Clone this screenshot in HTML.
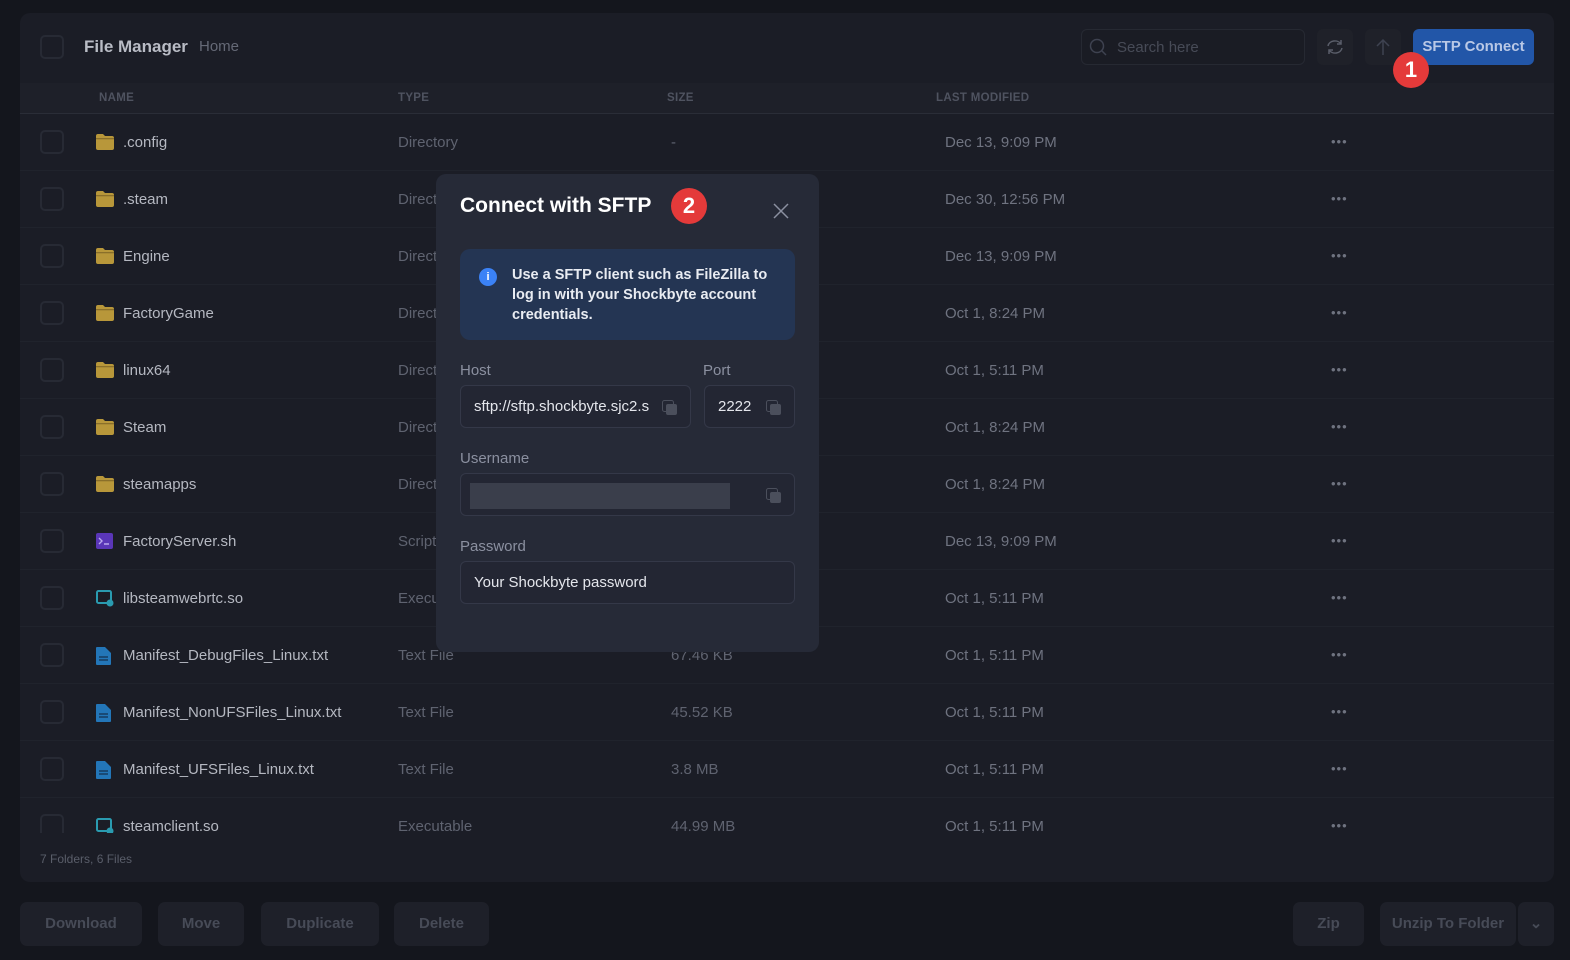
<!DOCTYPE html>
<html><head><meta charset="utf-8"><style>
*{box-sizing:border-box;margin:0;padding:0}
body{width:1570px;height:960px;background:#14161d;font-family:"Liberation Sans",sans-serif;position:relative;overflow:hidden;color:#9ea2ad}
.panel{position:absolute;left:20px;top:13px;width:1534px;height:869px;background:#1b1d26;border-radius:10px;overflow:hidden}
.cb{position:absolute;width:24px;height:24px;border:2px solid #272a34;border-radius:5px}
.hdr{position:absolute;left:0;top:70px;width:100%;height:31px;background:#1e2029;border-bottom:1px solid #2a2d37}
.th{position:absolute;top:79px;font-size:11.5px;font-weight:bold;color:#4f5360;letter-spacing:.3px}
.rows{position:absolute;left:0;top:101px;width:100%;height:719px;overflow:hidden}
.row{position:absolute;left:0;width:100%;height:57px;border-bottom:1px solid #20232c}
.row span{position:absolute;top:20px;font-size:15px}
.nm{left:103px;color:#b5b8c1}
.ty{left:378px;color:#5f6370}
.sz{left:651px;color:#5f6370}
.dt{left:925px;color:#6f7380}
.dots{left:1311px;color:#6f7380;letter-spacing:1px;font-size:13px!important}
.ic{position:absolute;left:76px;top:20px}
.btn{position:absolute;top:902px;height:44px;background:#1e2029;border-radius:7px;color:#474b57;font-size:15px;font-weight:bold;text-align:center;line-height:44px}
.modal{position:absolute;left:436px;top:174px;width:383px;height:478px;background:#262a37;border-radius:10px}
.lbl{position:absolute;left:24px;font-size:15px;color:#8b90a0}
.inp{position:absolute;height:43px;border:1.5px solid #343848;border-radius:6px;background:#232633;font-size:15px;color:#e4e6ec;padding-left:13px;line-height:41px;overflow:hidden;white-space:nowrap}
</style></head><body>
<div class="panel">
  <div class="cb" style="left:20px;top:22px"></div>
  <div style="position:absolute;left:64px;top:24px;font-size:17px;font-weight:bold;color:#b9bcc5">File Manager</div>
  <div style="position:absolute;left:179px;top:25px;font-size:15px;color:#656976">Home</div>
  <div style="position:absolute;left:1061px;top:16px;width:224px;height:36px;border:1.5px solid #262932;border-radius:6px;background:#1a1c24"></div>
  <svg style="position:absolute;left:1068px;top:24px" width="20" height="20" viewBox="0 0 20 20"><circle cx="9" cy="9" r="6.5" fill="none" stroke="#3e4250" stroke-width="1.5"/><path d="M14 14l4 4" stroke="#3e4250" stroke-width="1.5"/></svg>
  <div style="position:absolute;left:1097px;top:26px;font-size:15px;color:#474b57">Search here</div>
  <div style="position:absolute;left:1297px;top:16px;width:36px;height:36px;background:#1f2129;border-radius:6px"></div>
  <svg style="position:absolute;left:1305px;top:24px" width="20" height="20" viewBox="0 0 20 20" fill="none" stroke="#5a5e6a" stroke-width="1.5"><path d="M3 9a7 6 0 0 1 13-2M17 11a7 6 0 0 1-13 2"/><path d="M16 3v4h-4M4 17v-4h4"/></svg>
  <div style="position:absolute;left:1345px;top:16px;width:36px;height:36px;background:#1f2129;border-radius:6px"></div>
  <svg style="position:absolute;left:1353px;top:24px" width="20" height="20" viewBox="0 0 20 20" fill="none" stroke="#3e4250" stroke-width="1.5"><path d="M10 18V3M4 9l6-6 6 6"/></svg>
  <div style="position:absolute;left:1393px;top:16px;width:121px;height:36px;background:#2256a8;border-radius:6px;color:#b9c8e6;font-size:15px;font-weight:bold;text-align:center;line-height:36px">SFTP Connect</div>
  <div class="hdr"></div>
  <div style="position:absolute;left:1373px;top:39px;width:36px;height:36px;background:#e43a3a;border-radius:50%;color:#fff;font-size:22px;font-weight:bold;text-align:center;line-height:36px;z-index:5">1</div>
  <div class="th" style="left:79px">NAME</div>
  <div class="th" style="left:378px">TYPE</div>
  <div class="th" style="left:647px">SIZE</div>
  <div class="th" style="left:916px">LAST MODIFIED</div>
  <div class="rows">
    <div class="row" style="top:0"><div class="cb" style="left:20px;top:16px"></div><svg class="ic" width="18" height="16"><path d="M0 2a2 2 0 0 1 2-2h5l2 2h7a2 2 0 0 1 2 2v10a2 2 0 0 1-2 2H2a2 2 0 0 1-2-2z" fill="#b8973a"/><rect x="0" y="4" width="18" height="1.3" fill="#8a6f2a"/></svg><span class="nm">.config</span><span class="ty">Directory</span><span class="sz">-</span><span class="dt">Dec 13, 9:09 PM</span><span class="dots">•••</span></div>
    <div class="row" style="top:57px"><div class="cb" style="left:20px;top:16px"></div><svg class="ic" width="18" height="16"><path d="M0 2a2 2 0 0 1 2-2h5l2 2h7a2 2 0 0 1 2 2v10a2 2 0 0 1-2 2H2a2 2 0 0 1-2-2z" fill="#b8973a"/><rect x="0" y="4" width="18" height="1.3" fill="#8a6f2a"/></svg><span class="nm">.steam</span><span class="ty">Directory</span><span class="dt">Dec 30, 12:56 PM</span><span class="dots">•••</span></div>
    <div class="row" style="top:114px"><div class="cb" style="left:20px;top:16px"></div><svg class="ic" width="18" height="16"><path d="M0 2a2 2 0 0 1 2-2h5l2 2h7a2 2 0 0 1 2 2v10a2 2 0 0 1-2 2H2a2 2 0 0 1-2-2z" fill="#b8973a"/><rect x="0" y="4" width="18" height="1.3" fill="#8a6f2a"/></svg><span class="nm">Engine</span><span class="ty">Directory</span><span class="dt">Dec 13, 9:09 PM</span><span class="dots">•••</span></div>
    <div class="row" style="top:171px"><div class="cb" style="left:20px;top:16px"></div><svg class="ic" width="18" height="16"><path d="M0 2a2 2 0 0 1 2-2h5l2 2h7a2 2 0 0 1 2 2v10a2 2 0 0 1-2 2H2a2 2 0 0 1-2-2z" fill="#b8973a"/><rect x="0" y="4" width="18" height="1.3" fill="#8a6f2a"/></svg><span class="nm">FactoryGame</span><span class="ty">Directory</span><span class="dt">Oct 1, 8:24 PM</span><span class="dots">•••</span></div>
    <div class="row" style="top:228px"><div class="cb" style="left:20px;top:16px"></div><svg class="ic" width="18" height="16"><path d="M0 2a2 2 0 0 1 2-2h5l2 2h7a2 2 0 0 1 2 2v10a2 2 0 0 1-2 2H2a2 2 0 0 1-2-2z" fill="#b8973a"/><rect x="0" y="4" width="18" height="1.3" fill="#8a6f2a"/></svg><span class="nm">linux64</span><span class="ty">Directory</span><span class="dt">Oct 1, 5:11 PM</span><span class="dots">•••</span></div>
    <div class="row" style="top:285px"><div class="cb" style="left:20px;top:16px"></div><svg class="ic" width="18" height="16"><path d="M0 2a2 2 0 0 1 2-2h5l2 2h7a2 2 0 0 1 2 2v10a2 2 0 0 1-2 2H2a2 2 0 0 1-2-2z" fill="#b8973a"/><rect x="0" y="4" width="18" height="1.3" fill="#8a6f2a"/></svg><span class="nm">Steam</span><span class="ty">Directory</span><span class="dt">Oct 1, 8:24 PM</span><span class="dots">•••</span></div>
    <div class="row" style="top:342px"><div class="cb" style="left:20px;top:16px"></div><svg class="ic" width="18" height="16"><path d="M0 2a2 2 0 0 1 2-2h5l2 2h7a2 2 0 0 1 2 2v10a2 2 0 0 1-2 2H2a2 2 0 0 1-2-2z" fill="#b8973a"/><rect x="0" y="4" width="18" height="1.3" fill="#8a6f2a"/></svg><span class="nm">steamapps</span><span class="ty">Directory</span><span class="dt">Oct 1, 8:24 PM</span><span class="dots">•••</span></div>
    <div class="row" style="top:399px"><div class="cb" style="left:20px;top:16px"></div><svg class="ic" width="17" height="16"><rect width="17" height="16" rx="2" fill="#5a36b8"/><path d="M3 5l3 3-3 3M8 11h5" stroke="#b9a8ee" stroke-width="1.4" fill="none"/></svg><span class="nm">FactoryServer.sh</span><span class="ty">Script</span><span class="dt">Dec 13, 9:09 PM</span><span class="dots">•••</span></div>
    <div class="row" style="top:456px"><div class="cb" style="left:20px;top:16px"></div><svg class="ic" width="18" height="17"><rect x="1" y="1" width="14" height="12" rx="1.5" fill="none" stroke="#2a9bb0" stroke-width="2"/><circle cx="14" cy="13" r="3.5" fill="#2a9bb0"/></svg><span class="nm">libsteamwebrtc.so</span><span class="ty">Executable</span><span class="dt">Oct 1, 5:11 PM</span><span class="dots">•••</span></div>
    <div class="row" style="top:513px"><div class="cb" style="left:20px;top:16px"></div><svg class="ic" width="15" height="18"><path d="M0 1a1 1 0 0 1 1-1h8l6 6v11a1 1 0 0 1-1 1H1a1 1 0 0 1-1-1z" fill="#2376b8"/><path d="M3 10h9M3 13h9" stroke="#163c60" stroke-width="1.4"/></svg><span class="nm">Manifest_DebugFiles_Linux.txt</span><span class="ty">Text File</span><span class="sz">67.46 KB</span><span class="dt">Oct 1, 5:11 PM</span><span class="dots">•••</span></div>
    <div class="row" style="top:570px"><div class="cb" style="left:20px;top:16px"></div><svg class="ic" width="15" height="18"><path d="M0 1a1 1 0 0 1 1-1h8l6 6v11a1 1 0 0 1-1 1H1a1 1 0 0 1-1-1z" fill="#2376b8"/><path d="M3 10h9M3 13h9" stroke="#163c60" stroke-width="1.4"/></svg><span class="nm">Manifest_NonUFSFiles_Linux.txt</span><span class="ty">Text File</span><span class="sz">45.52 KB</span><span class="dt">Oct 1, 5:11 PM</span><span class="dots">•••</span></div>
    <div class="row" style="top:627px"><div class="cb" style="left:20px;top:16px"></div><svg class="ic" width="15" height="18"><path d="M0 1a1 1 0 0 1 1-1h8l6 6v11a1 1 0 0 1-1 1H1a1 1 0 0 1-1-1z" fill="#2376b8"/><path d="M3 10h9M3 13h9" stroke="#163c60" stroke-width="1.4"/></svg><span class="nm">Manifest_UFSFiles_Linux.txt</span><span class="ty">Text File</span><span class="sz">3.8 MB</span><span class="dt">Oct 1, 5:11 PM</span><span class="dots">•••</span></div>
    <div class="row" style="top:684px"><div class="cb" style="left:20px;top:16px"></div><svg class="ic" width="18" height="17"><rect x="1" y="1" width="14" height="12" rx="1.5" fill="none" stroke="#2a9bb0" stroke-width="2"/><circle cx="14" cy="13" r="3.5" fill="#2a9bb0"/></svg><span class="nm">steamclient.so</span><span class="ty">Executable</span><span class="sz">44.99 MB</span><span class="dt">Oct 1, 5:11 PM</span><span class="dots">•••</span></div>
  </div>
  <div style="position:absolute;left:20px;top:839px;font-size:12px;color:#5a5e6a">7 Folders, 6 Files</div>
</div>
<div class="btn" style="left:20px;width:122px">Download</div>
<div class="btn" style="left:158px;width:86px">Move</div>
<div class="btn" style="left:261px;width:118px">Duplicate</div>
<div class="btn" style="left:394px;width:95px">Delete</div>
<div class="btn" style="left:1293px;width:71px">Zip</div>
<div class="btn" style="left:1380px;width:136px">Unzip To Folder</div>
<div class="btn" style="left:1518px;width:36px">⌄</div>
<div class="modal">
  <div style="position:absolute;left:24px;top:20px;font-size:21px;font-weight:bold;color:#fff">Connect with SFTP</div>
  <div style="position:absolute;left:235px;top:14px;width:36px;height:36px;background:#e43a3a;border-radius:50%;color:#fff;font-size:22px;font-weight:bold;text-align:center;line-height:36px">2</div>
  <svg style="position:absolute;left:337px;top:29px" width="16" height="16"><path d="M1 1l14 14M15 1L1 15" stroke="#8b90a0" stroke-width="1.5"/></svg>
  <div style="position:absolute;left:24px;top:75px;width:335px;height:91px;background:#243553;border-radius:10px"></div>
  <div style="position:absolute;left:43px;top:94px;width:18px;height:18px;border-radius:50%;background:#3b82f6;color:#fff;font-size:11px;font-weight:bold;text-align:center;line-height:18px">i</div>
  <div style="position:absolute;left:76px;top:91px;width:275px;font-size:14.5px;font-weight:bold;color:#e9ecf2;line-height:20px">Use a SFTP client such as FileZilla to log in with your Shockbyte account credentials.</div>
  <div class="lbl" style="top:188px">Host</div>
  <div class="lbl" style="left:267px;top:188px">Port</div>
  <div class="inp" style="left:24px;top:211px;width:231px">sftp://sftp.shockbyte.sjc2.s</div>
  <div class="inp" style="left:268px;top:211px;width:91px">2222</div>
  <div class="lbl" style="top:276px">Username</div>
  <div class="inp" style="left:24px;top:299px;width:335px"><div style="position:absolute;left:9px;top:9px;width:260px;height:26px;background:#3a3e4b"></div></div>
  <div class="lbl" style="top:364px">Password</div>
  <div class="inp" style="left:24px;top:387px;width:335px">Your Shockbyte password</div>
  <svg style="position:absolute;left:226px;top:226px" width="16" height="16"><rect x="0.5" y="0.5" width="11" height="11" rx="2" fill="none" stroke="#4b4f5c"/><rect x="4" y="4" width="11" height="11" rx="2" fill="#4b4f5c"/></svg>
  <svg style="position:absolute;left:330px;top:226px" width="16" height="16"><rect x="0.5" y="0.5" width="11" height="11" rx="2" fill="none" stroke="#4b4f5c"/><rect x="4" y="4" width="11" height="11" rx="2" fill="#4b4f5c"/></svg>
  <svg style="position:absolute;left:330px;top:314px" width="16" height="16"><rect x="0.5" y="0.5" width="11" height="11" rx="2" fill="none" stroke="#4b4f5c"/><rect x="4" y="4" width="11" height="11" rx="2" fill="#4b4f5c"/></svg>
</div>
</body></html>
